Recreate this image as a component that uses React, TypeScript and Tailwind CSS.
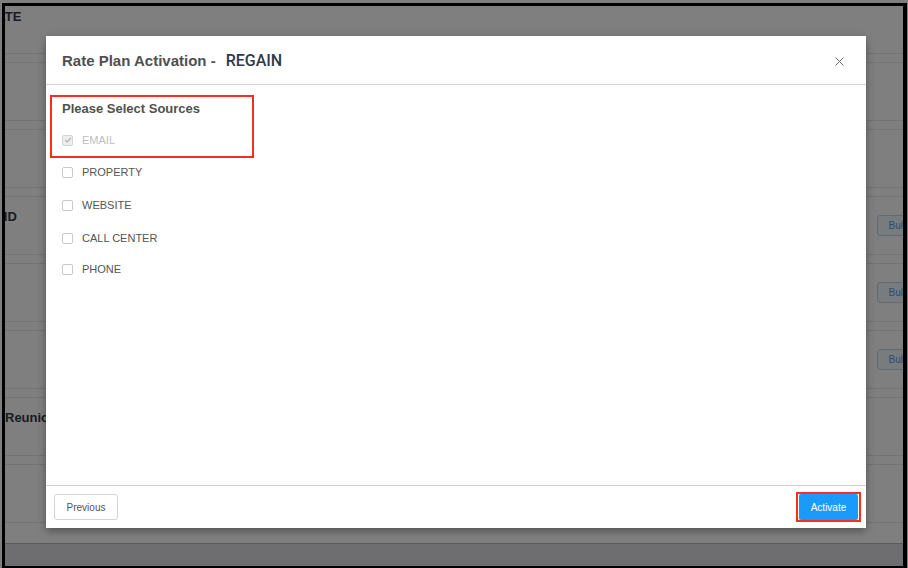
import React from 'react';

type Row = { label?: string; shift?: string; bulk?: boolean };

const rows: Row[] = [
  {},
  {},
  { label: 'ND', shift: '-ml-[7px]', bulk: true },
  { bulk: true },
  { bulk: true },
  { label: 'Reunion Package', shift: 'ml-0' },
  {},
];

const sources = [
  { name: 'EMAIL', checked: true, disabled: true, h: 'h-[32px]' },
  { name: 'PROPERTY', h: 'h-[33px]' },
  { name: 'WEBSITE', h: 'h-[33px]' },
  { name: 'CALL CENTER', h: 'h-[32px]' },
  { name: 'PHONE', h: 'h-[31px]' },
];

const Checkbox: React.FC<{ checked?: boolean; disabled?: boolean }> = ({ checked, disabled }) => (
  <span
    className={
      'flex h-[11px] w-[11px] shrink-0 items-center justify-center rounded-[2px] border ' +
      (disabled ? 'border-[#d4d4d4] bg-[#eeeeee]' : 'border-[#c9c9c9] bg-white')
    }
  >
    {checked && (
      <svg width="8" height="8" viewBox="0 0 8 8" fill="none">
        <path d="M1.3 4.2 L3.2 6 L6.8 1.8" stroke="#a9a9a9" strokeWidth="1.1" />
      </svg>
    )}
  </span>
);

const App: React.FC = () => {
  return (
    <div className="relative h-[568px] w-[908px] overflow-hidden bg-white font-['Liberation_Sans',Arial,sans-serif]">
      {/* page behind the modal */}
      <div className="ml-[2px] mt-[3px] flex h-[566px] w-[905px] flex-col overflow-hidden border-b-[3px] border-l-[3px] border-r-[4px] border-t-[3px] border-black">
        <div className="h-[48px] shrink-0 border-b border-[#e6e6e6] pt-[3px] leading-[13px]">
          <span className="-ml-[18px] text-[13px] font-bold text-[#303848]">RATE</span>
        </div>
        {rows.map((r, i) => (
          <div key={i} className="mt-[8px] flex h-[59px] shrink-0 items-center justify-between border-y border-[#e6e6e6]">
            <div className="self-start pt-[7px]">
              {r.label && <span className={'text-[13px] font-bold text-[#303848] ' + r.shift}>{r.label}</span>}
            </div>
            {r.bulk && (
              <button className="-mr-[36px] h-[21px] rounded-[3px] border border-[#bcd6ee] bg-[#f3f8fd] pl-[11px] pr-[10px] text-[10px] text-[#4a9de6]">
                Bulk Edit
              </button>
            )}
          </div>
        ))}
        <div className="mt-auto h-[23px] shrink-0 border-t border-[#b4b4b8] bg-[#dcdde1]" />
      </div>

      {/* overlay */}
      <div className="absolute inset-0 bg-black/50 pl-[46px] pt-[36px]">
        <div className="relative flex h-[492px] w-[820px] flex-col bg-white shadow-[0_3px_8px_rgba(0,0,0,0.35)]">
          <div className="flex h-[49px] shrink-0 items-center justify-between border-b border-[#d2d2d2] pl-[16px] pr-[22px] pt-[2px]">
            <div className="flex items-center">
              <span className="text-[15px] font-bold text-[#505050]">Rate Plan Activation -</span>
              <span className="ml-[10px] font-['Roboto',sans-serif] text-[16px] font-medium text-[#2c3a4b]">REGAIN</span>
            </div>
            <button className="flex h-[10px] w-[10px] items-center justify-center">
              <svg width="9" height="9" viewBox="0 0 9 9" fill="none">
                <path d="M0.5 0.5 L8.5 8.5 M8.5 0.5 L0.5 8.5" stroke="#6b6b6b" strokeWidth="1" />
              </svg>
            </button>
          </div>

          <div className="flex-1 pl-[16px] pt-[15px]">
            <div className="text-[13px] font-bold leading-[18px] text-[#505050]">Please Select Sources</div>
            <div className="mt-[6px] flex flex-col">
              {sources.map((s) => (
                <label key={s.name} className={'flex items-center gap-[9px] ' + s.h}>
                  <Checkbox checked={s.checked} disabled={s.disabled} />
                  <span className={'text-[11px] ' + (s.disabled ? 'text-[#bdbdbd]' : 'text-[#555555]')}>{s.name}</span>
                </label>
              ))}
            </div>
          </div>

          <div className="flex h-[43px] shrink-0 items-center justify-between border-t border-[#d2d2d2] px-[8px]">
            <button className="h-[26px] w-[64px] rounded-[3px] border border-[#d4d4d4] bg-white text-[10px] text-[#555555]">
              Previous
            </button>
            <div className="relative">
              <button className="h-[26px] w-[59px] rounded-[2px] bg-[#1a9bfc] text-[10px] text-white">Activate</button>
              <div className="absolute -inset-x-[3px] -inset-y-[2px] border-2 border-[#fb2d1f]" />
            </div>
          </div>

          <div className="absolute left-[4px] top-[59px] h-[63px] w-[204px] border-2 border-[#fb2d1f]" />
        </div>
      </div>
    </div>
  );
};

export default App;
